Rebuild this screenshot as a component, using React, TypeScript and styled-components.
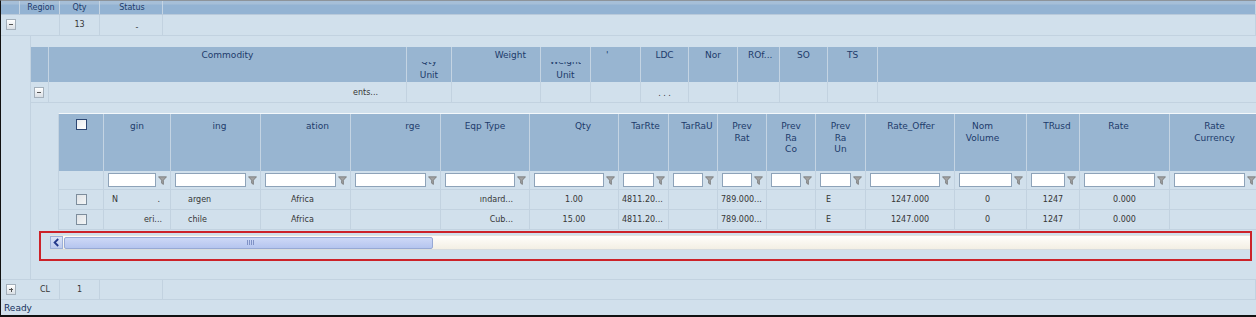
import React, { ReactNode } from 'react';
import styled, { createGlobalStyle } from 'styled-components';

const HEAD_BG = '#98b5d1';
const LIGHT = '#d1e0ec';
const LINE = '#c2d2e0';
const HEAD_LINE = '#c4d4e3';
const NAVY = '#1d3b6b';
const TEXT = '#363636';

type Align = 'left' | 'center' | 'right' | 'between';

const GlobalStyle = createGlobalStyle`
    html, body {
        margin: 0;
        padding: 0;
        background: ${LIGHT};
    }
    body {
        font-family: "DejaVu Sans", Verdana, sans-serif;
    }
`;

const Frame = styled.div`
    width: 1256px;
    height: 317px;
    box-sizing: border-box;
    border-top: 1px solid #8d949b;
    border-left: 1px solid #111;
    border-bottom: 2px solid #111;
    background: ${LIGHT};
    overflow: hidden;
    display: flex;
    flex-direction: column;
`;

const Row = styled.div<{ $cols: number[]; $h: number }>`
    display: grid;
    grid-template-columns: ${(p) => p.$cols.map((w) => `${w}px`).join(' ')};
    width: max-content;
    height: ${(p) => p.$h}px;
    box-sizing: border-box;
    flex-shrink: 0;
    border-bottom: 1px solid ${LINE};
`;

const TopHead = styled(Row)`
    background: linear-gradient(#a6bfd8 0, #a6bfd8 3px, #93b3d3 4px, #93b3d3 100%);
    border-bottom: 1px solid #b9cadb;
`;

const Cell = styled.div<{ $align?: Align; $pl?: number; $pr?: number; $pt?: number; $top?: boolean; $noLine?: boolean }>`
    display: flex;
    justify-content: ${(p) =>
        p.$align === 'left'
            ? 'flex-start'
            : p.$align === 'right'
            ? 'flex-end'
            : p.$align === 'between'
            ? 'space-between'
            : 'center'};
    align-items: ${(p) => (p.$top ? 'flex-start' : 'center')};
    padding: ${(p) => p.$pt ?? 0}px ${(p) => p.$pr ?? 0}px 0 ${(p) => p.$pl ?? 0}px;
    box-sizing: border-box;
    border-right: ${(p) => (p.$noLine ? 'none' : `1px solid ${LINE}`)};
    overflow: hidden;
    white-space: nowrap;
    min-width: 0;
    font-size: 8px;
    color: ${TEXT};
`;

const TopHeadCell = styled(Cell)`
    border-right: 1px solid ${HEAD_LINE};
    font-size: 8px;
    color: ${NAVY};
`;

const NestedSection = styled.div`
    display: flex;
    height: 244px;
    flex-shrink: 0;
    box-sizing: border-box;
    border-bottom: 1px solid ${LINE};
`;

const Indent = styled.div`
    width: 29px;
    flex-shrink: 0;
`;

const NestedBody = styled.div`
    flex: 1;
    min-width: 0;
    overflow: hidden;
    border-left: 1px solid ${LINE};
    padding-top: 11px;
    display: flex;
    flex-direction: column;
`;

const NestedHead = styled(Row)`
    background: ${HEAD_BG};
    border-bottom: none;
`;

const NestedHeadCell = styled.div<{ $align?: Align; $pl?: number; $pr?: number; $stack?: boolean }>`
    display: flex;
    flex-direction: column;
    justify-content: ${(p) => (p.$stack ? 'flex-end' : 'flex-start')};
    align-items: ${(p) =>
        p.$align === 'left' ? 'flex-start' : p.$align === 'right' ? 'flex-end' : 'center'};
    padding: ${(p) => (p.$stack ? '0' : '3px')} ${(p) => p.$pr ?? 0}px
        ${(p) => (p.$stack ? '2px' : '0')} ${(p) => p.$pl ?? 0}px;
    box-sizing: border-box;
    border-right: 1px solid ${HEAD_LINE};
    overflow: hidden;
    white-space: nowrap;
    font-size: 9px;
    line-height: 10px;
    color: ${NAVY};
`;

/* the grid shows only the lower edge of the first header line here */
const Clip = styled.span`
    display: block;
    height: 4px;
    overflow: hidden;
    margin-bottom: 4px;
    & > span {
        display: block;
        margin-top: -6px;
    }
`;

const Spacer = styled.div<{ $h: number }>`
    height: ${(p) => p.$h}px;
    flex-shrink: 0;
`;

const InnerTable = styled.div`
    margin-left: 27px;
    border-left: 1px solid ${LINE};
    border-top: 1px solid #f4f8fb;
    width: max-content;
`;

const InnerHead = styled(Row)`
    background: ${HEAD_BG};
    border-bottom: none;
`;

const InnerHeadCell = styled.div<{ $align?: Align; $pl?: number; $pr?: number }>`
    display: flex;
    flex-direction: column;
    align-items: ${(p) => (p.$align === 'right' ? 'flex-end' : 'center')};
    padding: 7px ${(p) => p.$pr ?? 0}px 0 ${(p) => p.$pl ?? 0}px;
    box-sizing: border-box;
    border-right: 1px solid ${HEAD_LINE};
    overflow: hidden;
    white-space: nowrap;
    font-size: 9px;
    line-height: 11.5px;
    color: ${NAVY};
`;

const FilterCell = styled.div`
    display: flex;
    align-items: center;
    padding: 0 3px 0 4px;
    box-sizing: border-box;
    border-right: 1px solid ${LINE};
    overflow: hidden;
`;

const FilterInput = styled.div`
    flex: 1;
    min-width: 0;
    height: 14px;
    box-sizing: border-box;
    background: #fff;
    border: 1px solid #8ea3b9;
    margin-right: 2px;
`;

const ExpandButton = styled.span<{ $plus?: boolean }>`
    position: relative;
    display: block;
    width: 10px;
    height: 11px;
    box-sizing: border-box;
    border: 1px solid #a3afba;
    background: linear-gradient(#ffffff, #d9dfe5);
    &::before {
        content: '';
        position: absolute;
        left: 2px;
        top: 4px;
        width: 4px;
        height: 1px;
        background: #555;
    }
    &::after {
        content: '';
        display: ${(p) => (p.$plus ? 'block' : 'none')};
        position: absolute;
        left: 3.5px;
        top: 2.5px;
        width: 1px;
        height: 4px;
        background: #555;
    }
`;

const CheckBox = styled.span<{ $head?: boolean }>`
    display: block;
    width: 11px;
    height: 11px;
    margin-top: ${(p) => (p.$head ? '-2px' : '0')};
    box-sizing: border-box;
    border: 1px solid ${(p) => (p.$head ? '#2c4672' : '#7d8d9c')};
    background: ${(p) =>
        p.$head ? 'linear-gradient(135deg, #e7ebef, #ffffff)' : 'linear-gradient(135deg, #dfe3e7, #f3f5f6)'};
`;

const ScrollFrame = styled.div`
    margin: 1px 0 0 8px;
    width: 1213px;
    height: 30px;
    box-sizing: border-box;
    border: 2px solid #cc2229;
    padding: 2px 0 0 9px;
    flex-shrink: 0;
`;

const Track = styled.div`
    display: flex;
    align-items: center;
    height: 15px;
    box-sizing: border-box;
    border-top: 1px solid #e6e4dc;
    border-bottom: 1px solid #d7dcdf;
    background: linear-gradient(#fffefb, #f3efe4);
`;

const ArrowButton = styled.div`
    width: 13px;
    height: 13px;
    box-sizing: border-box;
    border: 1px solid #9db0d8;
    background: linear-gradient(#dbe3f7, #bccaee);
    display: flex;
    align-items: center;
    justify-content: center;
`;

const Thumb = styled.div`
    width: 369px;
    height: 12px;
    margin-left: 1px;
    box-sizing: border-box;
    border: 1px solid #97a9d5;
    border-radius: 2px;
    background: linear-gradient(#cdd8f6, #b5c5ef);
    display: flex;
    align-items: center;
    justify-content: center;
`;

const Grip = styled.span`
    display: block;
    width: 8px;
    height: 5px;
    margin-left: 4px;
    background: repeating-linear-gradient(90deg, #8092c6 0 1px, transparent 1px 2px);
`;

const StatusBar = styled.div`
    height: 15px;
    flex-shrink: 0;
    display: flex;
    align-items: center;
    padding-left: 3px;
    font-size: 9px;
    color: #16335e;
`;

const Funnel = () => (
    <svg width="9" height="9" viewBox="0 0 9 9">
        <path
            d="M0.5 0.8 L8.5 0.8 L5.4 4.2 L5.4 8.4 L3.6 7.2 L3.6 4.2 Z"
            fill="#a3a3a3"
            stroke="#6d6d6d"
            strokeWidth="0.7"
        />
    </svg>
);

const Chevron = () => (
    <svg width="9" height="9" viewBox="0 0 9 9">
        <path d="M6.2 1 L2.6 4.5 L6.2 8" fill="none" stroke="#23388a" strokeWidth="1.8" />
    </svg>
);

const masterCols = [19, 40, 40, 63, 1093];

const nestedCols = [18, 358, 45, 89, 50, 50, 48, 49, 42, 48, 50, 400];

interface InnerCol {
    w: number;
    label: string[];
    align?: Align;
    pl?: number;
    pr?: number;
}

const innerCols: InnerCol[] = [
    { w: 45, label: [] },
    { w: 67, label: ['gin'] },
    { w: 90, label: ['ing'], pl: 8 },
    { w: 90, label: ['ation'], pl: 24 },
    { w: 90, label: ['rge'], align: 'right', pr: 20 },
    { w: 89, label: ['Eqp Type'] },
    { w: 89, label: ['Qty'], pl: 18 },
    { w: 50, label: ['TarRte'], pl: 4 },
    { w: 49, label: ['TarRaU'], pl: 8 },
    { w: 49, label: ['Prev', 'Rat'] },
    { w: 49, label: ['Prev', 'Ra', 'Co'] },
    { w: 50, label: ['Prev', 'Ra', 'Un'] },
    { w: 89, label: ['Rate_Offer'], pl: 2 },
    { w: 72, label: ['Nom', 'Volume'], pr: 16 },
    { w: 53, label: ['TRusd'], pl: 8 },
    { w: 90, label: ['Rate'], pr: 12 },
    { w: 90, label: ['Rate', 'Currency'] },
];

interface DataCell {
    v?: ReactNode;
    align?: Align;
    pl?: number;
    pr?: number;
}

const makeRow = (gin: DataCell, ing: string, eqp: string, qty: string): DataCell[] => [
    { v: <CheckBox /> },
    gin,
    { v: ing, align: 'left', pl: 17 },
    { v: 'Africa', align: 'left', pl: 30 },
    {},
    { v: eqp, align: 'right', pr: 16 },
    { v: qty },
    { v: '4811.20...', align: 'left', pl: 3 },
    {},
    { v: '789.000...', align: 'left', pl: 3 },
    {},
    { v: 'E', align: 'left', pl: 10 },
    { v: '1247.000' },
    { v: '0', pr: 6 },
    { v: '1247' },
    { v: '0.000' },
    {},
];

const rows: DataCell[][] = [
    makeRow(
        { v: (<><span>N</span><span>.</span></>), align: 'between', pl: 8, pr: 10 },
        'argen',
        'ındard...',
        '1.00',
    ),
    makeRow({ v: 'eri...', align: 'right', pr: 8 }, 'chile', 'Cub...', '15.00'),
];

const widths = innerCols.map((c) => c.w);

const App: React.FC = () => {
    return (
        <>
            <GlobalStyle />
            <Frame>
                <TopHead $cols={masterCols} $h={14}>
                    <TopHeadCell />
                    <TopHeadCell $pl={3}>Region</TopHeadCell>
                    <TopHeadCell>Qty</TopHeadCell>
                    <TopHeadCell $pl={2}>Status</TopHeadCell>
                    <TopHeadCell />
                </TopHead>
                <Row $cols={masterCols} $h={21}>
                    <Cell $align="left" $pl={5} $top $pt={4} $noLine>
                        <ExpandButton />
                    </Cell>
                    <Cell />
                    <Cell $top $pt={5}>13</Cell>
                    <Cell $top $pt={8} $pl={12}>-</Cell>
                    <Cell />
                </Row>
                <NestedSection>
                    <Indent />
                    <NestedBody>
                        <NestedHead $cols={nestedCols} $h={35}>
                            <NestedHeadCell />
                            <NestedHeadCell>Commodity</NestedHeadCell>
                            <NestedHeadCell $stack>
                                <Clip><span>Qty</span></Clip>
                                Unit
                            </NestedHeadCell>
                            <NestedHeadCell $align="right" $pr={14}>Weight</NestedHeadCell>
                            <NestedHeadCell $stack>
                                <Clip><span>Weight</span></Clip>
                                Unit
                            </NestedHeadCell>
                            <NestedHeadCell $align="left" $pl={15}>'</NestedHeadCell>
                            <NestedHeadCell>LDC</NestedHeadCell>
                            <NestedHeadCell>Nor</NestedHeadCell>
                            <NestedHeadCell $align="left" $pl={10}>ROf...</NestedHeadCell>
                            <NestedHeadCell>SO</NestedHeadCell>
                            <NestedHeadCell>TS</NestedHeadCell>
                            <NestedHeadCell />
                        </NestedHead>
                        <Row $cols={nestedCols} $h={21}>
                            <Cell $align="left" $pl={3}>
                                <ExpandButton />
                            </Cell>
                            <Cell $align="right" $pr={28}>ents...</Cell>
                            <Cell />
                            <Cell />
                            <Cell />
                            <Cell />
                            <Cell $pt={2}>. . .</Cell>
                            <Cell />
                            <Cell />
                            <Cell />
                            <Cell />
                            <Cell />
                        </Row>
                        <Spacer $h={10} />
                        <InnerTable>
                            <InnerHead $cols={widths} $h={57}>
                                {innerCols.map((c, i) => (
                                    <InnerHeadCell key={i} $align={c.align} $pl={c.pl} $pr={c.pr}>
                                        {i === 0 ? <CheckBox $head /> : c.label.map((l) => <span key={l}>{l}</span>)}
                                    </InnerHeadCell>
                                ))}
                            </InnerHead>
                            <Row $cols={widths} $h={19}>
                                {innerCols.map((c, i) =>
                                    i === 0 ? (
                                        <FilterCell key={i} />
                                    ) : (
                                        <FilterCell key={i}>
                                            <FilterInput />
                                            <Funnel />
                                        </FilterCell>
                                    ),
                                )}
                            </Row>
                            {rows.map((r, ri) => (
                                <Row key={ri} $cols={widths} $h={20}>
                                    {r.map((d, i) => (
                                        <Cell key={i} $align={d.align} $pl={d.pl} $pr={d.pr}>
                                            {d.v}
                                        </Cell>
                                    ))}
                                </Row>
                            ))}
                        </InnerTable>
                        <ScrollFrame>
                            <Track>
                                <ArrowButton>
                                    <Chevron />
                                </ArrowButton>
                                <Thumb>
                                    <Grip />
                                </Thumb>
                            </Track>
                        </ScrollFrame>
                    </NestedBody>
                </NestedSection>
                <Row $cols={masterCols} $h={20}>
                    <Cell $align="left" $pl={5} $noLine>
                        <ExpandButton $plus />
                    </Cell>
                    <Cell $align="left" $pl={20}>CL</Cell>
                    <Cell>1</Cell>
                    <Cell />
                    <Cell />
                </Row>
                <StatusBar>Ready</StatusBar>
            </Frame>
        </>
    );
};

export default App;
